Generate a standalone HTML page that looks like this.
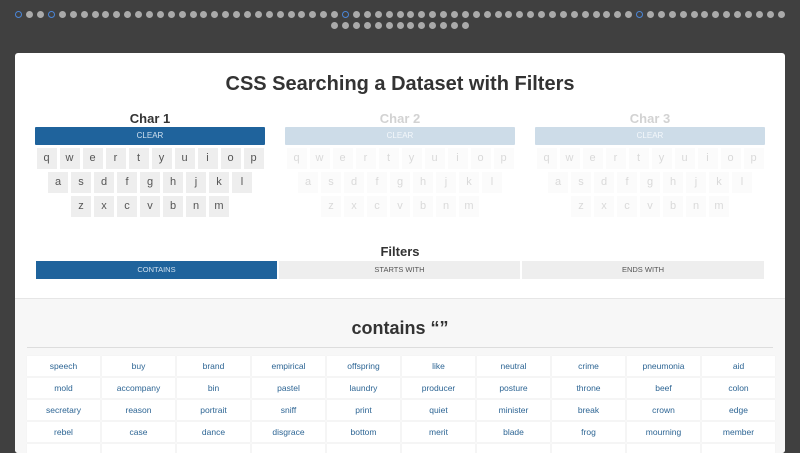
<!DOCTYPE html>
<html><head><meta charset="utf-8"><style>
*{box-sizing:border-box;margin:0;padding:0}
body{width:800px;height:450px;overflow:hidden;background:#404040;font-family:"Liberation Sans",sans-serif;position:relative}
.dots{position:absolute;left:0;width:800px;display:flex;justify-content:center;gap:3.9px}
.dots i{display:block;width:7px;height:7px;border-radius:50%;background:#aaa}
.dots i.b{background:#404040;border:1.5px solid #4a86d8;box-shadow:inset 0 0 0 1px #404040}
.card{position:absolute;left:15px;top:53px;width:770px;height:400px;background:#fff;border-radius:3px;overflow:hidden}
.lower{position:absolute;left:0;top:245px;width:770px;height:160px;background:#f7f7f7;border-top:1px solid #e6e6e6}
h1{position:absolute;left:0;width:770px;top:20px;text-align:center;font-size:20px;color:#333;font-weight:bold}
.col{position:absolute;top:57px;width:230px}
.col h2{text-align:center;font-size:13px;font-weight:bold;color:#333;height:17px;line-height:17px}
.clr{height:18px;background:#1f639c;color:#cfe0ef;font-size:8px;text-align:center;line-height:18px;border-radius:1px}
.row{display:flex;justify-content:center;gap:3px;margin-top:3px}
.row span{width:20px;height:21px;background:#eee;color:#555;font-size:11px;text-align:center;line-height:21px}
.dim{opacity:.22}
.ft{position:absolute;top:191px;width:770px;text-align:center;font-size:13px;font-weight:bold;color:#333}
.fb{position:absolute;top:208px;height:18px;font-size:7.5px;text-align:center;line-height:18px;background:#eee;color:#555}
.fb.a{background:#1f639c;color:#cfe0ef}
h3{position:absolute;top:265px;width:770px;text-align:center;font-size:18px;color:#333;font-weight:bold}
.hr{position:absolute;left:12px;top:294px;width:746px;height:1px;background:#ddd}
.grid{position:absolute;left:12px;top:303px;width:748px;display:grid;grid-template-columns:repeat(10,73px);gap:2px}
.grid div{height:20px;background:#fff;font-size:8.5px;color:#2d6594;text-align:center;line-height:20px;box-shadow:0 0 1px #eee}
</style></head><body>
<div class="dots" style="top:11px"><i class="b"></i><i></i><i></i><i class="b"></i><i></i><i></i><i></i><i></i><i></i><i></i><i></i><i></i><i></i><i></i><i></i><i></i><i></i><i></i><i></i><i></i><i></i><i></i><i></i><i></i><i></i><i></i><i></i><i></i><i></i><i></i><i class="b"></i><i></i><i></i><i></i><i></i><i></i><i></i><i></i><i></i><i></i><i></i><i></i><i></i><i></i><i></i><i></i><i></i><i></i><i></i><i></i><i></i><i></i><i></i><i></i><i></i><i></i><i></i><i class="b"></i><i></i><i></i><i></i><i></i><i></i><i></i><i></i><i></i><i></i><i></i><i></i><i></i><i></i></div>
<div class="dots" style="top:22px"><i></i><i></i><i></i><i></i><i></i><i></i><i></i><i></i><i></i><i></i><i></i><i></i><i></i></div>
<div class="card">
<h1>CSS Searching a Dataset with Filters</h1>
<div class="col" style="left:20px"><h2>Char 1</h2><div class="clr">CLEAR</div>
<div class="row"><span>q</span><span>w</span><span>e</span><span>r</span><span>t</span><span>y</span><span>u</span><span>i</span><span>o</span><span>p</span></div>
<div class="row"><span>a</span><span>s</span><span>d</span><span>f</span><span>g</span><span>h</span><span>j</span><span>k</span><span>l</span></div>
<div class="row"><span>z</span><span>x</span><span>c</span><span>v</span><span>b</span><span>n</span><span>m</span></div></div>
<div class="col dim" style="left:270px"><h2>Char 2</h2><div class="clr">CLEAR</div>
<div class="row"><span>q</span><span>w</span><span>e</span><span>r</span><span>t</span><span>y</span><span>u</span><span>i</span><span>o</span><span>p</span></div>
<div class="row"><span>a</span><span>s</span><span>d</span><span>f</span><span>g</span><span>h</span><span>j</span><span>k</span><span>l</span></div>
<div class="row"><span>z</span><span>x</span><span>c</span><span>v</span><span>b</span><span>n</span><span>m</span></div></div>
<div class="col dim" style="left:520px"><h2>Char 3</h2><div class="clr">CLEAR</div>
<div class="row"><span>q</span><span>w</span><span>e</span><span>r</span><span>t</span><span>y</span><span>u</span><span>i</span><span>o</span><span>p</span></div>
<div class="row"><span>a</span><span>s</span><span>d</span><span>f</span><span>g</span><span>h</span><span>j</span><span>k</span><span>l</span></div>
<div class="row"><span>z</span><span>x</span><span>c</span><span>v</span><span>b</span><span>n</span><span>m</span></div></div>
<div class="ft">Filters</div>
<div class="fb a" style="left:21px;width:241px">CONTAINS</div>
<div class="fb" style="left:264px;width:241px">STARTS WITH</div>
<div class="fb" style="left:507px;width:242px">ENDS WITH</div>
<div class="lower"></div>
<h3>contains “”</h3>
<div class="hr"></div>
<div class="grid">
<div>speech</div><div>buy</div><div>brand</div><div>empirical</div><div>offspring</div><div>like</div><div>neutral</div><div>crime</div><div>pneumonia</div><div>aid</div>
<div>mold</div><div>accompany</div><div>bin</div><div>pastel</div><div>laundry</div><div>producer</div><div>posture</div><div>throne</div><div>beef</div><div>colon</div>
<div>secretary</div><div>reason</div><div>portrait</div><div>sniff</div><div>print</div><div>quiet</div><div>minister</div><div>break</div><div>crown</div><div>edge</div>
<div>rebel</div><div>case</div><div>dance</div><div>disgrace</div><div>bottom</div><div>merit</div><div>blade</div><div>frog</div><div>mourning</div><div>member</div>
<div></div><div></div><div></div><div></div><div></div><div></div><div></div><div></div><div></div><div></div>
</div>
</div>
</body></html>
